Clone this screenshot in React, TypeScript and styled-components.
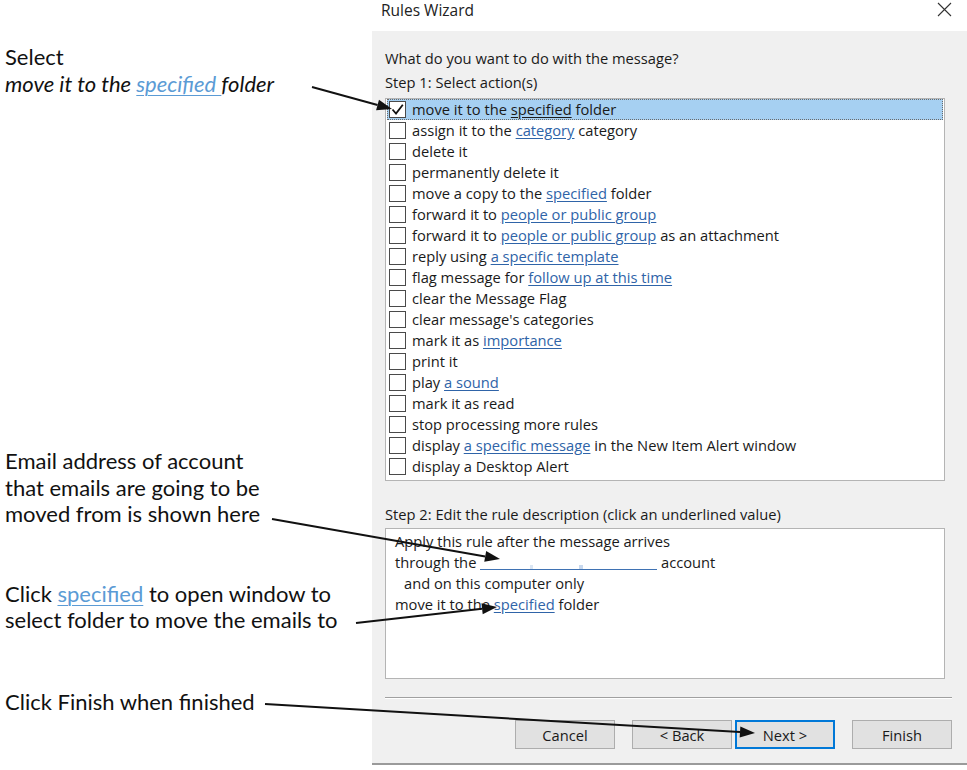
import React from "react";
import styled, { createGlobalStyle } from "styled-components";

const GlobalStyle = createGlobalStyle`
  html, body {
    margin: 0;
    padding: 0;
    background: #ffffff;
    overflow: hidden;
  }
`;

const Page = styled.div`
  position: relative;
  width: 967px;
  height: 770px;
  display: flex;
  background: #ffffff;
`;

const Notes = styled.div`
  width: 372px;
  flex-shrink: 0;
  display: flex;
  flex-direction: column;
  padding: 44px 0 0 5px;
  box-sizing: border-box;
  font-family: "Lato", "Open Sans", sans-serif;
  font-size: 22px;
  line-height: 26.5px;
  color: #111111;
`;

const Note = styled.div<{ $space: number }>`
  margin-top: ${(p) => p.$space}px;
`;

const NoteItalic = styled.div`
  font-style: italic;
`;

const NoteLink = styled.span`
  color: #5b9bd5;
  text-decoration: underline;
  text-underline-offset: 3px;
  text-decoration-thickness: 1px;
`;

const Dialog = styled.div`
  width: 595px;
  flex-shrink: 0;
  display: flex;
  flex-direction: column;
  font-family: "Open Sans", "Noto Sans", sans-serif;
  font-size: 14.7px;
  color: #1a1a1a;
`;

const TitleBar = styled.div`
  height: 31px;
  display: flex;
  justify-content: space-between;
  align-items: flex-start;
  padding: 0 15px 0 9px;
  background: #ffffff;
`;

const Title = styled.div`
  font-size: 15.5px;
  line-height: 20px;
  color: #222222;
`;

const CloseBox = styled.div`
  width: 16px;
  height: 18px;
  display: flex;
  align-items: center;
  justify-content: center;
`;

const Body = styled.div`
  background: #f0f0f0;
  padding: 17px 15px 14px 13px;
  border-bottom: 2px solid #9a9a9a;
  display: flex;
  flex-direction: column;
`;

const Label = styled.div<{ $space?: number }>`
  line-height: 21px;
  margin-top: ${(p) => p.$space ?? 0}px;
  white-space: nowrap;
`;

const ActionList = styled.div`
  margin: 5px 7px 0 0;
  height: 383px;
  box-sizing: border-box;
  background: #ffffff;
  border: 1px solid #b4b4b4;
  padding: 0 1px 3px 1px;
  display: flex;
  flex-direction: column;
`;

const Row = styled.div<{ $selected?: boolean }>`
  height: 21px;
  box-sizing: border-box;
  display: flex;
  align-items: center;
  gap: 6px;
  padding-left: ${(p) => (p.$selected ? 1 : 2)}px;
  background: ${(p) => (p.$selected ? "#a6d0f2" : "transparent")};
  border: ${(p) => (p.$selected ? "1px dotted #6a6a6a" : "none")};
  white-space: nowrap;
  line-height: 21px;
`;

const Box = styled.div`
  width: 17px;
  height: 17px;
  box-sizing: border-box;
  border: 1px solid #4a4a4a;
  background: #ffffff;
  display: flex;
  align-items: center;
  justify-content: center;
  flex-shrink: 0;
`;

const Link = styled.span<{ $plain?: boolean }>`
  color: ${(p) => (p.$plain ? "#1a1a1a" : "#2f64a8")};
  text-decoration: underline;
  text-underline-offset: 2px;
`;

const Description = styled.div`
  margin: 3px 7px 0 0;
  height: 151px;
  box-sizing: border-box;
  background: #ffffff;
  border: 1px solid #b4b4b4;
  padding: 2px 9px;
  line-height: 21px;
`;

const DescLine = styled.div<{ $indent?: number }>`
  padding-left: ${(p) => p.$indent ?? 0}px;
  white-space: nowrap;
`;

const Hidden = styled.span`
  display: inline-block;
  width: 177px;
  height: 15px;
  vertical-align: -2px;
  border-bottom: 1px solid #3f72b3;
  background: linear-gradient(90deg, transparent 0 28%, #dbe6f3 28% 30%, transparent 30% 56%, #c9d9ee 56% 58%, transparent 58%)
    bottom / 100% 4px no-repeat;
`;

const Separator = styled.div`
  margin-top: 18px;
  height: 1px;
  background: #a0a0a0;
  border-bottom: 1px solid #ffffff;
`;

const Buttons = styled.div`
  margin-top: 21px;
  display: flex;
  justify-content: flex-end;
`;

const Button = styled.div<{ $space: number; $focus?: boolean }>`
  width: 100px;
  height: 29px;
  box-sizing: border-box;
  margin-left: ${(p) => p.$space}px;
  background: #e1e1e1;
  border: ${(p) => (p.$focus ? "2px solid #0078d7" : "1px solid #adadad")};
  display: flex;
  align-items: center;
  justify-content: center;
  color: #1a1a1a;
`;

const Overlay = styled.svg`
  position: absolute;
  left: 0;
  top: 0;
  pointer-events: none;
`;

type Action = { pre: string; link?: string; post?: string };

const actions: Action[] = [
  { pre: "move it to the ", link: "specified", post: " folder" },
  { pre: "assign it to the ", link: "category", post: " category" },
  { pre: "delete it" },
  { pre: "permanently delete it" },
  { pre: "move a copy to the ", link: "specified", post: " folder" },
  { pre: "forward it to ", link: "people or public group" },
  { pre: "forward it to ", link: "people or public group", post: " as an attachment" },
  { pre: "reply using ", link: "a specific template" },
  { pre: "flag message for ", link: "follow up at this time" },
  { pre: "clear the Message Flag" },
  { pre: "clear message's categories" },
  { pre: "mark it as ", link: "importance" },
  { pre: "print it" },
  { pre: "play ", link: "a sound" },
  { pre: "mark it as read" },
  { pre: "stop processing more rules" },
  { pre: "display ", link: "a specific message", post: " in the New Item Alert window" },
  { pre: "display a Desktop Alert" },
];

function Arrow({ x1, y1, x2, y2 }: { x1: number; y1: number; x2: number; y2: number }) {
  const a = Math.atan2(y2 - y1, x2 - x1);
  const len = 15;
  const half = 5.5;
  const bx = x2 - len * Math.cos(a);
  const by = y2 - len * Math.sin(a);
  const px = -Math.sin(a) * half;
  const py = Math.cos(a) * half;
  return (
    <g>
      <line x1={x1} y1={y1} x2={bx} y2={by} stroke="#111" strokeWidth={2} />
      <polygon points={`${x2},${y2} ${bx + px},${by + py} ${bx - px},${by - py}`} fill="#111" />
    </g>
  );
}

export default function App() {
  return (
    <>
      <GlobalStyle />
      <Page>
        <Notes>
          <Note $space={0}>
            <div>Select</div>
            <NoteItalic>
              move it to the <NoteLink>specified </NoteLink>folder
            </NoteItalic>
          </Note>
          <Note $space={351}>
            <div>Email address of account</div>
            <div>that emails are going to be</div>
            <div>moved from is shown here</div>
          </Note>
          <Note $space={53}>
            <div>
              Click <NoteLink>specified</NoteLink> to open window to
            </div>
            <div>select folder to move the emails to</div>
          </Note>
          <Note $space={55}>
            <div>Click Finish when finished</div>
          </Note>
        </Notes>

        <Dialog>
          <TitleBar>
            <Title>Rules Wizard</Title>
            <CloseBox>
              <svg width="15" height="15" viewBox="0 0 15 15">
                <path d="M1 1 L14 14 M14 1 L1 14" stroke="#333" strokeWidth="1.1" fill="none" />
              </svg>
            </CloseBox>
          </TitleBar>
          <Body>
            <Label>What do you want to do with the message?</Label>
            <Label $space={3}>Step 1: Select action(s)</Label>
            <ActionList>
              {actions.map((act, i) => (
                <Row key={i} $selected={i === 0}>
                  <Box>
                    {i === 0 && (
                      <svg width="13" height="13" viewBox="0 0 13 13">
                        <path d="M1.5 6.5 L5 10.5 L11.8 1.8" stroke="#111" strokeWidth="1.8" fill="none" />
                      </svg>
                    )}
                  </Box>
                  <span>
                    {act.pre}
                    {act.link && <Link $plain={i === 0}>{act.link}</Link>}
                    {act.post}
                  </span>
                </Row>
              ))}
            </ActionList>
            <Label $space={23}>Step 2: Edit the rule description (click an underlined value)</Label>
            <Description>
              <DescLine>Apply this rule after the message arrives</DescLine>
              <DescLine>
                through the <Hidden /> account
              </DescLine>
              <DescLine $indent={9}>and on this computer only</DescLine>
              <DescLine>
                move it to the <Link>specified</Link> folder
              </DescLine>
            </Description>
            <Separator />
            <Buttons>
              <Button $space={0}>Cancel</Button>
              <Button $space={17}>&lt; Back</Button>
              <Button $space={3} $focus>
                Next &gt;
              </Button>
              <Button $space={17}>Finish</Button>
            </Buttons>
          </Body>
        </Dialog>

        <Overlay width="967" height="770" viewBox="0 0 967 770">
          <Arrow x1={312} y1={87} x2={392} y2={109} />
          <Arrow x1={272} y1={519} x2={500} y2={559} />
          <Arrow x1={356} y1={623} x2={497} y2={607} />
          <Arrow x1={265} y1={704} x2={755} y2={733} />
        </Overlay>
      </Page>
    </>
  );
}
